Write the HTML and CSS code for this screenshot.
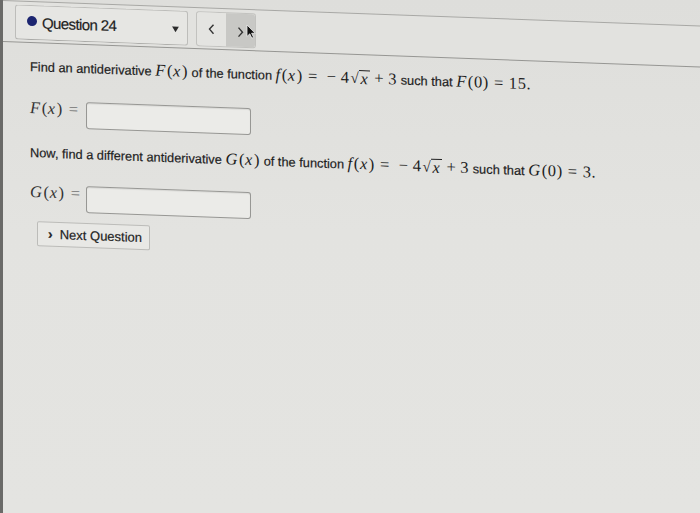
FILE: index.html
```html
<!DOCTYPE html>
<html lang="en">
<head>
<meta charset="utf-8">
<title>Question 24</title>
<link rel="stylesheet" href="styles.css">
</head>
<body>
<div class="page">
  <header class="toolbar">
    <div class="qselect">
      <span class="dot"></span>
      <span class="qlabel">Question 24</span>
      <svg class="caret" width="7" height="6" viewBox="0 0 7 6"><path d="M0 0H7L3.5 6Z" fill="#2b2b2b"/></svg>
    </div>
    <div class="nav">
      <button class="navbtn prev" type="button" aria-label="Previous">
        <svg width="7" height="11" viewBox="0 0 7 11"><path d="M5.5 1L1.5 5.5L5.5 10" fill="none" stroke="#333" stroke-width="1.4"/></svg>
      </button>
      <button class="navbtn next" type="button" aria-label="Next">
        <svg width="7" height="11" viewBox="0 0 7 11"><path d="M1.5 1L5.5 5.5L1.5 10" fill="none" stroke="#333" stroke-width="1.4"/></svg>
        <svg class="cursor" width="10" height="15" viewBox="0 0 10 15"><path d="M1 1V12.5L3.8 9.8L5.8 14L7.6 13.2L5.6 9.1H9.2Z" fill="#111" stroke="#eee" stroke-width="0.8"/></svg>
      </button>
    </div>
  </header>

  <main class="content">
    <p class="prompt">Find an antiderivative <span class="math"><i>F</i>(<i>x</i>)</span> of the function <span class="math"><i>f</i>(<i>x</i>)<span class="rel">=</span><span class="bin">−</span>4<span class="sqrt"><span class="radic">√</span><span class="rad"><i>x</i></span></span><span class="bin">+</span>3</span> such that <span class="math"><i>F</i>(0)<span class="rel">=</span>15.</span></p>

    <div class="answer">
      <span class="label math"><i>F</i>(<i>x</i>)<span class="rel">=</span></span>
      <div class="box"></div>
    </div>

    <p class="prompt second">Now, find a different antiderivative <span class="math"><i>G</i>(<i>x</i>)</span> of the function <span class="math"><i>f</i>(<i>x</i>)<span class="rel">=</span><span class="bin">−</span>4<span class="sqrt"><span class="radic">√</span><span class="rad"><i>x</i></span></span><span class="bin">+</span>3</span> such that <span class="math"><i>G</i>(0)<span class="rel">=</span>3.</span></p>

    <div class="answer answer-g">
      <span class="label math"><i>G</i>(<i>x</i>)<span class="rel">=</span></span>
      <div class="box"></div>
    </div>

    <button class="nextq" type="button"><span class="chev">›</span>Next Question</button>
  </main>
</div>
</body>
</html>
```

FILE: styles.css
```css
html, body {
  margin: 0;
  padding: 0;
}

body {
  width: 700px;
  height: 513px;
  overflow: hidden;
  background: linear-gradient(180deg, #dededb 0%, #e3e3e0 45%, #e4e4e1 100%);
  border-left: 3px solid #6a6a68;
  box-sizing: border-box;
  font-family: "Liberation Sans", Arial, sans-serif;
  color: #222;
}

.page {
  width: 697px;
  transform: skewY(2.1deg);
  transform-origin: 0 0;
}

/* ---------- toolbar ---------- */
.toolbar {
  display: flex;
  align-items: flex-start;
  gap: 8px;
  height: 42px;
  padding: 3px 0 0 12px;
  box-sizing: border-box;
  border-top: 1px solid #a8a8a5;
  border-bottom: 1px solid #969693;
  background: #e2e2df;
}

.qselect {
  display: flex;
  align-items: center;
  width: 173px;
  height: 35px;
  box-sizing: border-box;
  padding: 0 8px 0 11px;
  border: 1px solid #bdbdba;
  border-bottom-color: #aaaaa7;
  border-radius: 3px;
  background: #e6e6e3;
}

.dot {
  width: 10px;
  height: 10px;
  border-radius: 50%;
  background: #1c2570;
  margin-top: -3px;
  flex: none;
}

.qlabel {
  margin-left: 5px;
  font-family: "Liberation Sans", Arial, sans-serif;
  font-size: 15px;
  letter-spacing: -0.6px;
  color: #1e1e1e;
  -webkit-text-stroke: 0.2px #1e1e1e;
}

.caret {
  margin-left: auto;
  margin-top: 3px;
}

.nav {
  display: flex;
  height: 33px;
  border: 1px solid #c2c2bf;
  border-radius: 3px;
}

.navbtn {
  width: 29px;
  height: 100%;
  border: 0;
  padding: 0;
  display: flex;
  align-items: center;
  justify-content: center;
  background: #e4e4e1;
}

.navbtn.prev {
  border-radius: 3px 0 0 3px;
}

.navbtn.next {
  position: relative;
  background: #c8c8c5;
  border-radius: 0 3px 3px 0;
  padding-top: 3px;
}

.cursor {
  position: absolute;
  left: 20px;
  top: 10px;
}

/* ---------- content ---------- */
.content {
  padding: 13px 0 0 27px;
}

.prompt {
  margin: 0;
  font-size: 12.8px;
  line-height: 20px;
  white-space: nowrap;
  color: #1e1e1e;
  -webkit-text-stroke: 0.2px #1e1e1e;
}

.prompt.second {
  margin-top: 15px;
}

.math {
  font-family: "Liberation Serif", "Times New Roman", serif;
  font-size: 16.5px;
  letter-spacing: 0.6px;
  color: #1d1d1d;
  -webkit-text-stroke: 0;
}

.math i {
  font-style: italic;
  padding-right: 1px;
}

.rel {
  margin: 0 5px;
}

.bin {
  margin: 0 4px;
}

.sqrt {
  display: inline-flex;
  align-items: flex-start;
  margin-left: 1px;
}

.radic {
  font-size: 15px;
}

.rad {
  border-top: 1px solid #222;
  margin-top: 2px;
  line-height: 15px;
  padding: 0 1px;
}

.answer {
  display: flex;
  align-items: flex-start;
  margin-top: 23px;
}

.answer-g {
  margin-top: 21px;
}

.answer .label {
  width: 56px;
  margin-top: -2px;
  line-height: 20px;
  color: #333;
}

.answer .label .rel {
  margin: 0 0 0 6px;
  color: #777;
}

.box {
  width: 165px;
  height: 27px;
  box-sizing: border-box;
  border: 1px solid #979794;
  border-radius: 3px;
  background: #ebebe8;
  box-shadow: inset 0 1px 1px rgba(0,0,0,0.08);
}

.nextq {
  display: flex;
  align-items: center;
  margin: 10px 0 0 7px;
  width: 113px;
  height: 25px;
  padding: 0 0 0 10px;
  border: 1px solid #bcbcb9;
  border-radius: 2px;
  background: #e8e8e5;
  font-family: "Liberation Sans", Arial, sans-serif;
  font-size: 13px;
  color: #222;
  -webkit-text-stroke: 0.2px #222;
}

.chev {
  font-weight: bold;
  font-size: 14px;
  margin-right: 7px;
  margin-top: -2px;
}
```
